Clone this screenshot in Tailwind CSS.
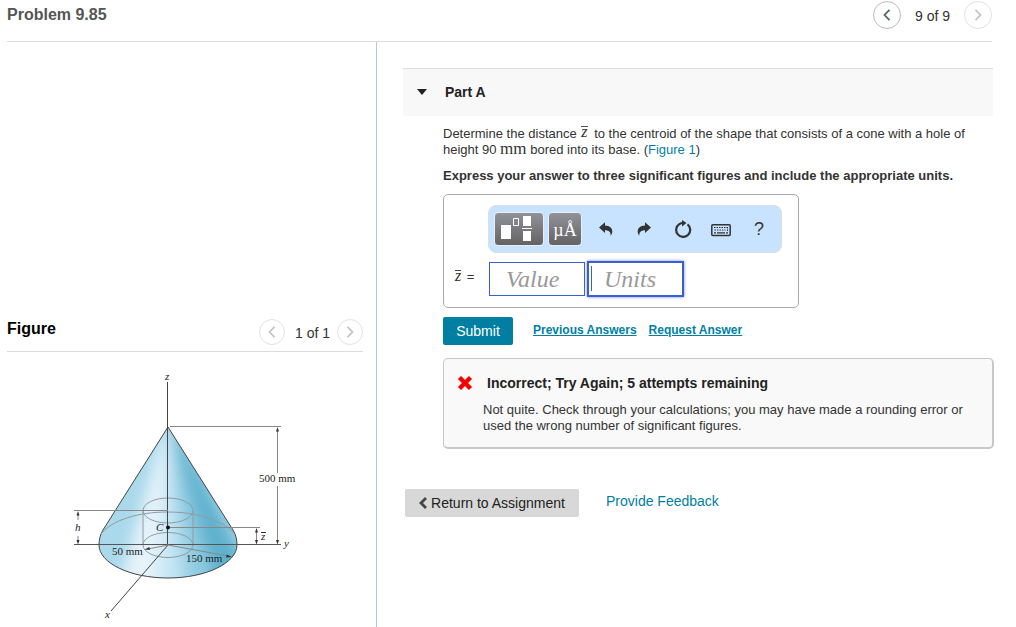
<!DOCTYPE html>
<html lang="en">
<head>
    <meta charset="UTF-8">
    <meta name="viewport" content="width=device-width, initial-scale=1.0">
    <title>Problem 9.85</title>
    <script src="https://cdn.jsdelivr.net/npm/@tailwindcss/browser@4"></script>
</head>
<body class="min-h-screen flex flex-col bg-white font-['Liberation_Sans',Arial,sans-serif] text-[13px] leading-4 text-[#333]">
    <header class="ml-[7px] mr-6 h-[42px] flex shrink-0 justify-between border-b border-[#dcdcdc]">
        <h1 class="pt-[5px] text-base leading-5 font-bold text-[#555]">Problem 9.85</h1>
        <nav class="flex items-start pt-px text-sm leading-7">
            <button type="button" aria-label="Previous problem" class="size-7 flex items-center justify-center rounded-full border border-[#bbb]">
                <svg class="w-2 h-3" viewBox="0 0 8 12" fill="none" stroke="#566" stroke-width="1.8"><path d="M6.5 .8 1.5 6l5 5.2"/></svg>
            </button>
            <span class="px-[14px] pt-px">9 of 9</span>
            <button type="button" aria-label="Next problem" class="size-7 flex items-center justify-center rounded-full border border-[#e2e2e2]">
                <svg class="w-2 h-3" viewBox="0 0 8 12" fill="none" stroke="#c4c4c4" stroke-width="1.8"><path d="m1.5 .8 5 5.2-5 5.2"/></svg>
            </button>
        </nav>
    </header>

    <div class="flex flex-1">
        <!-- Figure column -->
        <aside class="w-[377px] shrink-0 border-r border-[#b5c7da] pl-[7px] pr-[13px] pt-[277px]">
            <div class="flex h-[33px] justify-between border-b border-[#dcdcdc]">
                <h2 class="text-base leading-5 font-bold text-black">Figure</h2>
                <nav class="flex text-sm leading-[26px]">
                    <button type="button" aria-label="Previous figure" class="size-[26px] flex items-center justify-center rounded-full border border-[#e2e2e2]">
                        <svg class="w-2 h-3" viewBox="0 0 8 12" fill="none" stroke="#c4c4c4" stroke-width="1.8"><path d="M6.5 .8 1.5 6l5 5.2"/></svg>
                    </button>
                    <span class="pl-[10px] pr-[7px] pt-px">1 of 1</span>
                    <button type="button" aria-label="Next figure" class="size-[26px] flex items-center justify-center rounded-full border border-[#e2e2e2]">
                        <svg class="w-2 h-3" viewBox="0 0 8 12" fill="none" stroke="#c4c4c4" stroke-width="1.8"><path d="m1.5 .8 5 5.2-5 5.2"/></svg>
                    </button>
                </nav>
            </div>
            <svg class="mt-4 ml-[53px] w-[250px] h-[256px]" viewBox="60 368 250 256" fill="none" stroke-width="1" role="img" aria-label="Cone with a cylindrical hole in its base">
                <defs>
                    <clipPath id="coneShape">
                        <path d="M168 427 103 530C100 535 99 540 99 545C99 563 130 578 168 578S237 563 237 545C237 540 236 535 233 530Z"/>
                    </clipPath>
                    <filter id="soft" x="-20%" y="-20%" width="140%" height="140%">
                        <feGaussianBlur stdDeviation="7"/>
                    </filter>
                </defs>
                <!-- shading runs in wedges from the apex -->
                <g clip-path="url(#coneShape)">
                    <path d="M90 420h160v165H90z" fill="#a9d9eb"/>
                    <g filter="url(#soft)">
                        <path d="M168 415 118 590h42z" fill="#e6f3fb"/>
                        <path d="M168 415 156 590h22z" fill="#cbe8f4"/>
                        <path d="M168 410 192 590h60v-20z" fill="#8dcbe0"/>
                        <path d="M168 410 216 590h20l10-24z" fill="#5fb1ce"/>
                    </g>
                </g>
                <path d="M168 427 103 530C100 535 99 540 99 545C99 563 130 578 168 578S237 563 237 545C237 540 236 535 233 530Z" stroke="#444"/>
                <!-- hidden edges -->
                <g stroke="#8e9ca6">
                    <path d="M101 534C112 520 138 512 168 512s58 9 67 23"/>
                    <ellipse cx="168" cy="510.500" rx="25" ry="12.500"/>
                    <ellipse cx="168" cy="545" rx="25" ry="12.500"/>
                    <path d="M143 511v34M193 511v34"/>
                </g>
                <!-- axes -->
                <g stroke="#444">
                    <path d="M167.500 382v163M168 545l-57 66"/>
                    <path d="M74 544.500h207" stroke="#555"/>
                </g>
                <!-- dimensions -->
                <g stroke="#888">
                    <path d="M170 426.500h111M277.500 430v43M277.500 486v56M74 510.500h94M78 514v6M78 536v6M168 527.500h92M256.500 531v11M168 545l60 11M168 545l-20 4"/>
                </g>
                <g fill="#333">
                    <path d="m277.500 427 1.500 4.500h-3zM277.500 544.500l1.500-4.500h-3zM78 511l1.500 4.500h-3zM78 544.500l1.500-4.500h-3zM256.500 528l1.500 4.500h-3zM256.500 544.500l1.500-4.500h-3zM232 557l-6 .4.700-3zM144.500 549.500l5.500.4-.6-3z"/>
                    <circle cx="168" cy="527.500" r="2" fill="#111"/>
                </g>
                <g fill="#222" font-family="Liberation Serif, serif" font-size="11">
                    <text x="259" y="482">500 mm</text>
                    <text x="112" y="555">50 mm</text>
                    <text x="186" y="562">150 mm</text>
                    <g font-style="italic">
                        <text x="165" y="380">z</text>
                        <text x="284" y="547">y</text>
                        <text x="105" y="618">x</text>
                        <text x="75" y="531">h</text>
                        <text x="156" y="531">C</text>
                        <text x="261" y="540">z</text>
                    </g>
                </g>
                <path d="M261 532.500h5" stroke="#333"/>
            </svg>
        </aside>

        <!-- Question column -->
        <main class="flex-1 min-w-0 pl-[26px] pr-[23px] pt-[26px]">
            <section>
                <div class="flex h-12 items-center border-t border-[#dcdcdc] bg-[#f8f8f8] pl-[14px] pb-px">
                    <svg class="w-[10px] h-[6px]" viewBox="0 0 10 6" fill="#222"><path d="M0 0h10L5 6z"/></svg>
                    <h2 class="ml-[18px] text-sm font-bold text-[#222]">Part A</h2>
                </div>

                <div class="pl-10 pt-[10px]">
                    <p>Determine the distance <span class="inline-block ml-px mr-[3px] border-t border-[#555] align-[1px] font-['Liberation_Serif',serif] italic text-base leading-[9px]">z</span>&nbsp;to the centroid of the shape that consists of a cone with a hole of height 90 <span class="font-['Liberation_Serif',serif] text-[17px] leading-3">mm</span> bored into its base. (<a href="#" class="text-[#007fa3]">Figure 1</a>)</p>
                    <p class="mt-[10px] font-bold">Express your answer to three significant figures and include the appropriate units.</p>

                    <form class="mt-[10px]">
                        <div class="w-[356px] h-[114px] rounded-[5px] border border-[#aaa] pl-11 pt-[10px]">
                            <div class="w-[294px] h-12 flex items-center rounded-lg border border-[#dcdfe3] bg-[#c8e3ff] pl-[5px]">
                                <button type="button" aria-label="Templates" class="w-[50px] h-[34px] rounded border border-[#e8eef5] bg-linear-to-b from-[#92929a] to-[#636363]">
                                    <svg class="w-12 h-8" viewBox="0 0 48 32" fill="#fff"><path d="M6 12h10v14H6zM28 3h8v10h-8zM28 18h8v10h-8zM27 15h10v1H27z"/><path d="M18.500 5.500h5v7h-5z" fill="none" stroke="#fff"/></svg>
                                </button>
                                <button type="button" class="ml-1 w-[34px] h-[34px] rounded border border-[#e8eef5] bg-linear-to-b from-[#92929a] to-[#636363] pt-[2px] font-['Liberation_Serif',serif] text-lg leading-7 text-white">µÅ</button>
                                <button type="button" aria-label="Undo" class="ml-[15px] p-[1px]">
                                    <svg class="w-4 h-4" viewBox="0 0 16 16" fill="#333"><path d="M1 6.500 7 1.300V4.600c4.500.2 7.300 2.500 7.300 6 0 1.700-.6 3-1.700 4.200.5-3.500-1.600-5.400-5.600-5.500v2.800z"/></svg>
                                </button>
                                <button type="button" aria-label="Redo" class="ml-5 p-[1px]">
                                    <svg class="w-4 h-4" viewBox="0 0 16 16" fill="#333"><path d="M15 6.500 9 1.300V4.600c-4.500.2-7.300 2.500-7.300 6 0 1.700.6 3 1.700 4.200-.5-3.500 1.600-5.400 5.600-5.500v2.800z"/></svg>
                                </button>
                                <button type="button" aria-label="Reset" class="ml-5 p-[1px]">
                                    <svg class="w-[18px] h-[18px]" viewBox="0 0 18 18"><path d="M5.300 4.100a7 7 0 1 0 8.200.3M5.300 4.100c1-.7 2.200-1.100 3.700-1.100" fill="none" stroke="#333" stroke-width="2.200"/><path d="m8 0 4.500 3L8 6.500z" fill="#333"/></svg>
                                </button>
                                <button type="button" aria-label="Keyboard" class="ml-[17px] p-[1px]">
                                    <svg class="w-5 h-5" viewBox="0 0 20 20" fill="none" stroke="#333"><rect x=".8" y="5.800" width="18.400" height="10.700" rx="1" stroke-width="1.500"/><path d="M3 8.500h14M3.500 11h11M16.500 8v4" stroke-dasharray="1.500 1"/><path d="M3 13.800h2M6 13.800h8M15 13.800h2" stroke-width="1.300"/></svg>
                                </button>
                                <button type="button" aria-label="Help" class="ml-5 px-[2px] text-lg">?</button>
                            </div>
                            <div class="-ml-11 mt-2 flex items-center">
                                <label for="value" class="w-[45px] pl-[11px] pb-1 whitespace-nowrap text-[13px]"><span class="inline-block mr-[2px] border-t border-[#444] font-['Liberation_Serif',serif] text-base italic leading-[9px]">z</span> =</label>
                                <input id="value" type="text" placeholder="Value" class="w-24 h-[34px] border border-[#3c5fd0] pl-4 font-['Liberation_Serif',serif] text-2xl italic placeholder:text-[#999] outline-none">
                                <div class="relative ml-[2px]">
                                    <input type="text" aria-label="Units" placeholder="Units" class="w-[97px] h-[36px] border-2 border-[#3c5fd0] pl-[15px] font-['Liberation_Serif',serif] text-2xl italic placeholder:text-[#999] outline-none shadow-[0_0_3px_#6a86ea]">
                                    <span class="absolute left-1 top-[5px] h-[25px] w-px bg-[#3c5fd0]"></span>
                                </div>
                            </div>
                        </div>

                        <div class="mt-[9px] flex items-start">
                            <button type="submit" class="w-[70px] h-7 rounded-xs bg-[#007fa3] text-sm text-white">Submit</button>
                            <a href="#" class="ml-5 mt-[5px] text-xs font-bold text-[#007fa3] underline">Previous Answers</a>
                            <a href="#" class="ml-3 mt-[5px] text-xs font-bold text-[#007fa3] underline">Request Answer</a>
                        </div>
                    </form>

                    <div class="mt-[13px] -mr-px h-[91px] rounded-[5px] border border-r-2 border-b-2 border-[#c8c8c8] bg-[#f9f9f9] pl-[13px] pr-4 pt-4">
                        <div class="flex items-center">
                            <svg class="w-4 h-4" viewBox="0 0 16 16" fill="none" stroke="#f40000" stroke-width="4.500"><path d="m2.500 2.500 11 11M13.500 2.500l-11 11"/></svg>
                            <h3 class="ml-[14px] text-sm leading-4 font-bold text-[#222]">Incorrect; Try Again; 5 attempts remaining</h3>
                        </div>
                        <p class="mt-[11px] ml-[26px]">Not quite. Check through your calculations; you may have made a rounding error or used the wrong number of significant figures.</p>
                    </div>
                </div>
            </section>

            <footer class="ml-[2px] mt-10 flex items-start text-sm">
                <button type="button" class="w-[174px] h-7 flex items-center justify-center rounded-xs bg-[#d8d8d8] text-[#222]">
                    <svg class="mr-1 w-2 h-3" viewBox="0 0 8 12" fill="none" stroke="#444" stroke-width="2.800"><path d="M7 1 2 6l5 5"/></svg>
                    Return to Assignment
                </button>
                <a href="#" class="ml-[27px] mt-[2px] text-[#007fa3]">Provide Feedback</a>
            </footer>
        </main>
    </div>
</body>
</html>
